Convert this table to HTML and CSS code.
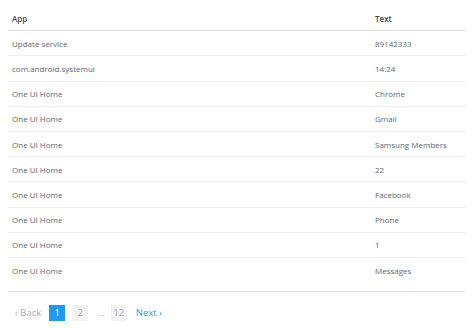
FILE: index.html
```html
<!DOCTYPE html>
<html>
<head>
<meta charset="utf-8">
<link rel="stylesheet" href="styles.css">
</head>
<body>
<div class="page">
  <div class="table">
    <div class="row head">
      <div class="cell app">App</div>
      <div class="cell txt">Text</div>
    </div>
    <div class="row"><div class="cell app">Update service</div><div class="cell txt">89142333</div></div>
    <div class="row"><div class="cell app">com.android.systemui</div><div class="cell txt">14:24</div></div>
    <div class="row"><div class="cell app">One UI Home</div><div class="cell txt">Chrome</div></div>
    <div class="row"><div class="cell app">One UI Home</div><div class="cell txt">Gmail</div></div>
    <div class="row"><div class="cell app">One UI Home</div><div class="cell txt">Samsung Members</div></div>
    <div class="row"><div class="cell app">One UI Home</div><div class="cell txt">22</div></div>
    <div class="row"><div class="cell app">One UI Home</div><div class="cell txt">Facebook</div></div>
    <div class="row"><div class="cell app">One UI Home</div><div class="cell txt">Phone</div></div>
    <div class="row"><div class="cell app">One UI Home</div><div class="cell txt">1</div></div>
    <div class="row last"><div class="cell app">One UI Home</div><div class="cell txt">Messages</div></div>
  </div>
  <div class="pager">
    <span class="nav prev">&#8249; Back</span>
    <span class="pg active">1</span>
    <span class="pg">2</span>
    <span class="dots">...</span>
    <span class="pg">12</span>
    <span class="nav next">Next &#8250;</span>
  </div>
</div>
</body>
</html>
```
FILE: styles.css
```css
html, body {
  margin: 0;
  padding: 0;
  background: #ffffff;
}
.page {
  padding: 6px 8px 0 8px;
  font-family: "Open Sans", "Liberation Sans", sans-serif;
  font-size: 8px;
  color: #62666c;
}
.table {
  display: flex;
  flex-direction: column;
  border-bottom: 1px solid #e4e4e7;
}
.row {
  display: flex;
  align-items: center;
  height: 24.2px;
  border-bottom: 1px solid #efeff1;
}
.row.head {
  border-bottom: 1px solid #e0e0e3;
  color: #3f4349;
  font-weight: 600;
}
.row.last {
  border-bottom: none;
  height: 25px;
  padding-bottom: 8px;
  align-items: flex-start;
}
.row.last .cell {
  line-height: 25px;
}
.cell {
  padding-left: 4px;
  white-space: nowrap;
}
.cell.app {
  width: 359px;
}
.cell.txt {
  flex: 1;
}
.pager {
  display: flex;
  align-items: center;
  height: 42px;
  padding-left: 7px;
  font-size: 9.5px;
}
.nav {
  color: #a9adb3;
  margin-right: 8px;
}
.nav.next {
  color: #2f9be6;
  margin-left: 2px;
}
.pg {
  display: inline-flex;
  align-items: center;
  justify-content: center;
  min-width: 16px;
  height: 16px;
  background: #f3f3f6;
  color: #a4a8ae;
  margin-right: 7px;
}
.pg.active {
  background: #1b9cf2;
  color: #ffffff;
}
.dots {
  color: #a9adb3;
  margin: 0 6px 0 2px;
}
```
